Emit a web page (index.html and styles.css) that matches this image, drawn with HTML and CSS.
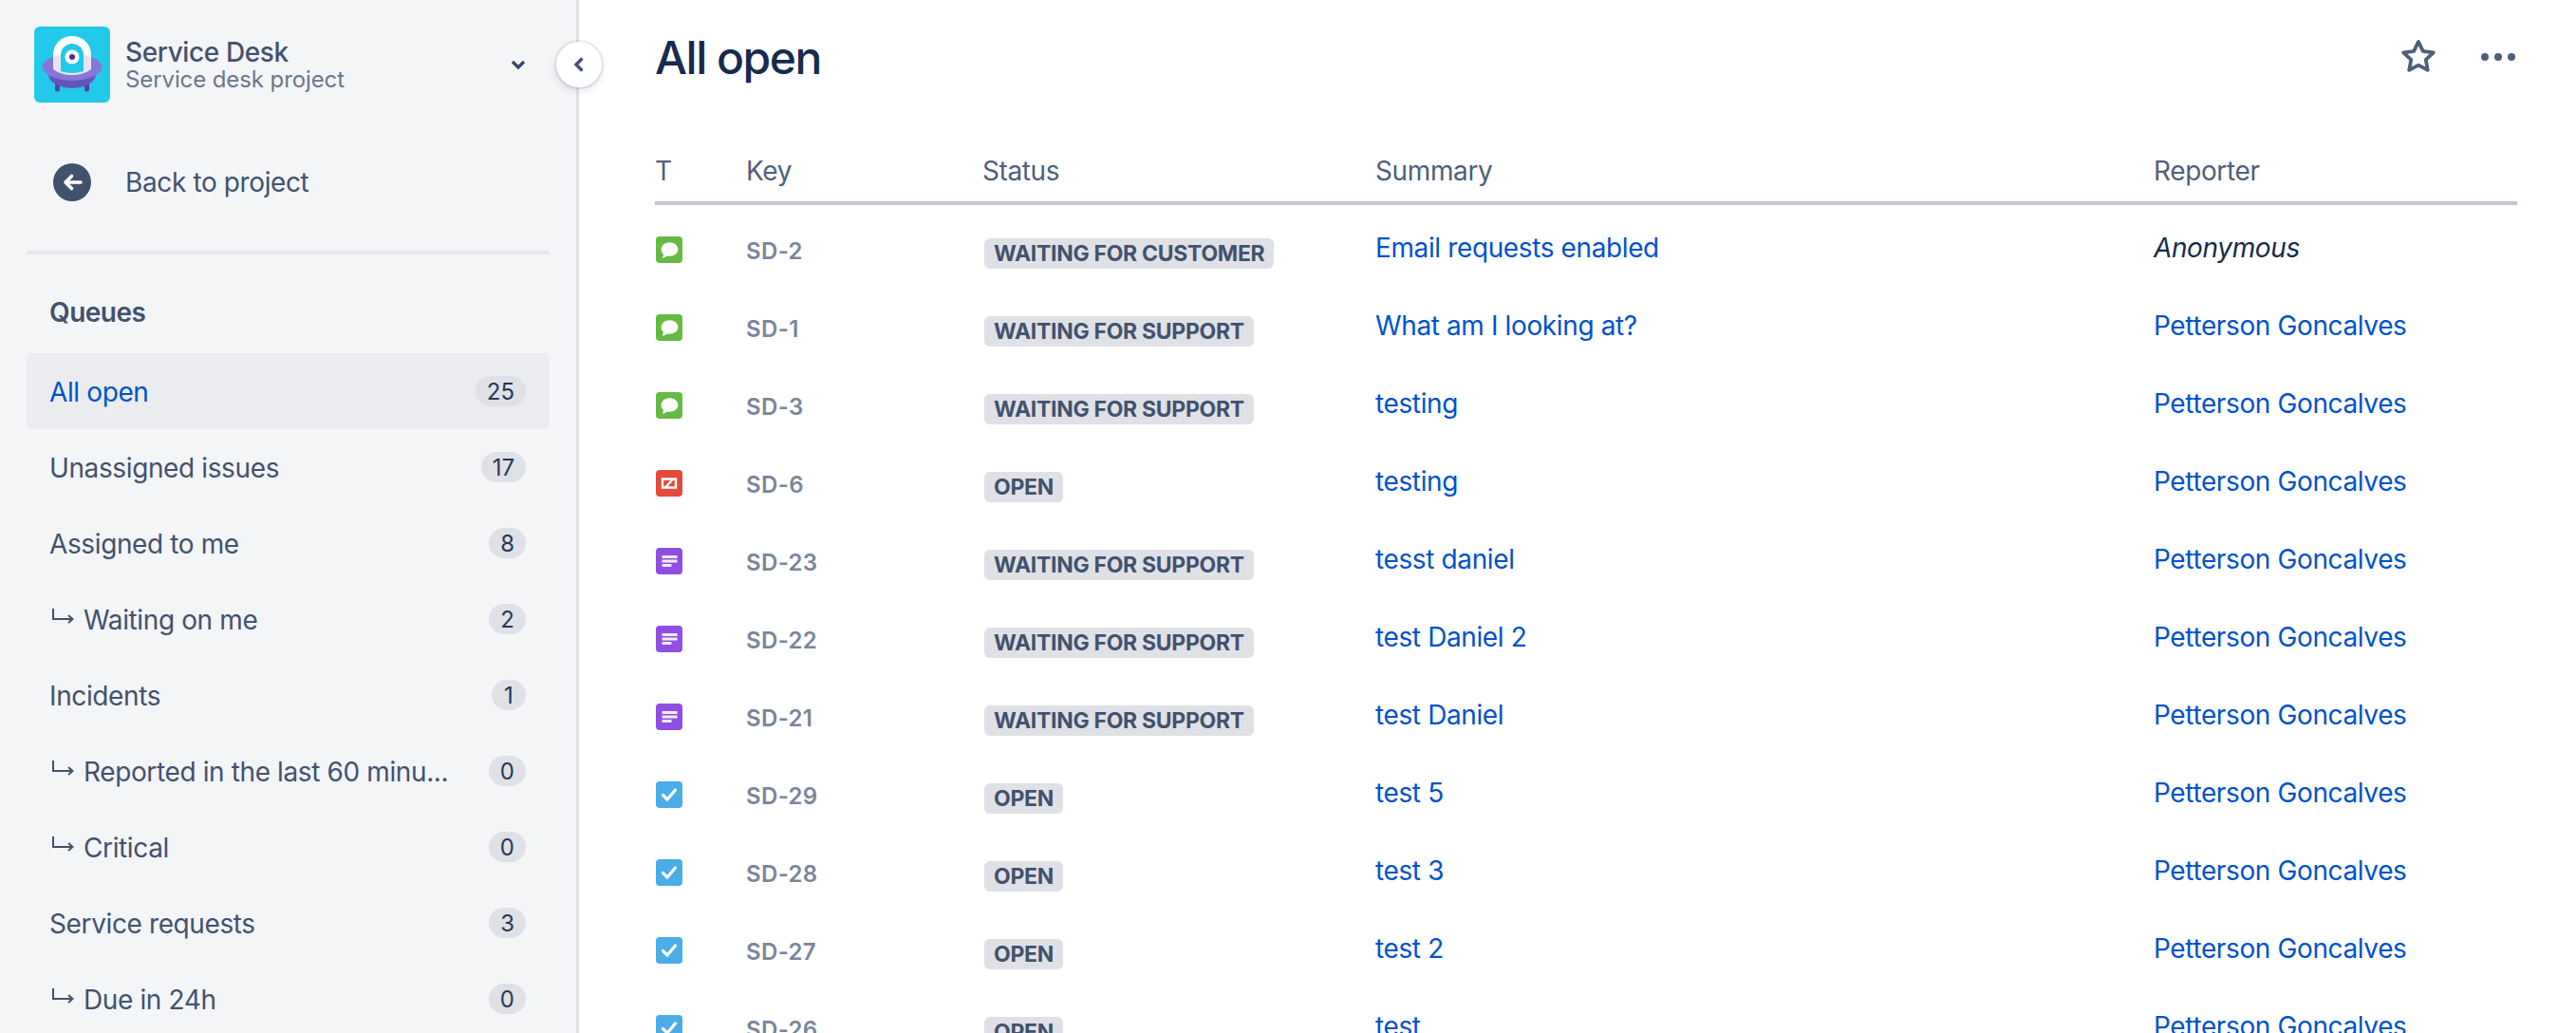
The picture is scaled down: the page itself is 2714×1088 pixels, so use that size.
FILE: index.html
```html
<!DOCTYPE html>
<html lang="en">
<head>
<meta charset="utf-8">
<title>All open - Service Desk</title>
<link rel="stylesheet" href="styles.css">
</head>
<body>
<svg class="defs" width="0" height="0" aria-hidden="true">
  <symbol id="i-chat" viewBox="0 0 28 28"><rect width="28" height="28" rx="4" fill="#65ba43"/><path d="M14.500 6.200c-5 0-8.900 3-8.900 7.500 0 2.200.9 3.900 2.400 5.100-.1 1.300-.5 2.800-1.300 3.900 2-.2 3.800-1 5-2.300.9.200 1.800.3 2.800.3 5 0 8.900-3 8.900-7 0-4.500-3.900-7.500-8.900-7.500z" fill="#fff"/></symbol>
  <symbol id="i-inc" viewBox="0 0 28 28"><rect width="28" height="28" rx="4" fill="#e5493a"/><path d="M7 9.500h14v9H7z" fill="none" stroke="#fff" stroke-width="2.400"/><path d="M10 18.500l8-9" stroke="#fff" stroke-width="2.400"/></symbol>
  <symbol id="i-doc" viewBox="0 0 28 28"><rect width="28" height="28" rx="4" fill="#904ee2"/><path d="M6.500 9.500h16M6.500 14h16M6.500 18.500h10" stroke="#f3ebfd" stroke-width="2.800"/></symbol>
  <symbol id="i-task" viewBox="0 0 28 28"><rect width="28" height="28" rx="4" fill="#4bade8"/><path d="M7.500 14.500l4.500 4.500 8.500-10" fill="none" stroke="#fff" stroke-width="3.200" stroke-linecap="round" stroke-linejoin="round"/></symbol>
  <symbol id="i-sub" viewBox="0 0 24 18"><path d="M1 1v11h20M17 8l4.500 4-4.500 4" fill="none" stroke="#42526e" stroke-width="2"/></symbol>
</svg>
<div class="app">
  <aside class="sidebar">
    <div class="project">
      <svg class="logo" viewBox="0 0 80 80">
        <rect width="80" height="80" rx="6" fill="#23c9e8"/>
        <rect x="22" y="50" width="5" height="18.500" rx="2.500" fill="#5243aa"/>
        <rect x="53" y="50" width="5" height="18.500" rx="2.500" fill="#5243aa"/>
        <ellipse cx="40" cy="50" rx="25" ry="15" fill="#6554c0"/>
        <path d="M20 30a20 20 0 0 1 40 0v20H20z" fill="#fff"/>
        <ellipse cx="40" cy="42.700" rx="31.300" ry="14" fill="#8777d9"/>
        <path d="M20 30a20 20 0 0 1 40 0v15q-8 6-20 6t-20-6z" fill="#fff" opacity=".8"/>
        <path d="M28 30a12 12 0 0 1 24 0v17q-6 2-12 2t-12-2z" fill="#23c9e8"/>
        <circle cx="40" cy="32" r="7.500" fill="#fff"/>
        <circle cx="40" cy="32" r="3" fill="#403294"/>
      </svg>
      <div class="project-text">
        <div class="project-name">Service Desk</div>
        <div class="project-type">Service desk project</div>
      </div>
      <svg class="project-caret" viewBox="0 0 16 12"><path d="M2 3l6 6 6-6" fill="none" stroke="#344563" stroke-width="3.200"/></svg>
    </div>
    <div class="back">
      <svg class="back-icon" viewBox="0 0 40 40"><circle cx="20" cy="20" r="20" fill="#42526e"/><path d="M29 20H13M19.500 13.500L13 20l6.500 6.500" fill="none" stroke="#fff" stroke-width="3.600" stroke-linecap="round" stroke-linejoin="round"/></svg>
      <span>Back to project</span>
    </div>
    <div class="divider"></div>
    <div class="queues-title">Queues</div>
    <nav class="queues">
      <a class="queue active"><span class="q-name">All open</span><span class="q-count">25</span></a>
      <a class="queue"><span class="q-name">Unassigned issues</span><span class="q-count">17</span></a>
      <a class="queue"><span class="q-name">Assigned to me</span><span class="q-count">8</span></a>
      <a class="queue"><svg class="q-sub"><use href="#i-sub"/></svg><span class="q-name">Waiting on me</span><span class="q-count">2</span></a>
      <a class="queue"><span class="q-name">Incidents</span><span class="q-count">1</span></a>
      <a class="queue"><svg class="q-sub"><use href="#i-sub"/></svg><span class="q-name">Reported in the last 60 minu...</span><span class="q-count">0</span></a>
      <a class="queue"><svg class="q-sub"><use href="#i-sub"/></svg><span class="q-name">Critical</span><span class="q-count">0</span></a>
      <a class="queue"><span class="q-name">Service requests</span><span class="q-count">3</span></a>
      <a class="queue"><svg class="q-sub"><use href="#i-sub"/></svg><span class="q-name">Due in 24h</span><span class="q-count">0</span></a>
    </nav>
    <button class="collapse" aria-label="Collapse sidebar"><svg viewBox="0 0 14 20"><path d="M10.500 3.500L4 10l6.500 6.500" fill="none" stroke="#42526e" stroke-width="3.400"/></svg></button>
  </aside>
  <main class="main">
    <header class="page-head">
      <h1>All open</h1>
      <div class="actions">
        <svg class="star" viewBox="0 0 36 36"><path d="M18 3.500l4.300 9 9.900 1.300-7.200 6.800 1.800 9.800-8.800-4.700-8.800 4.700 1.800-9.800-7.200-6.800 9.900-1.300z" fill="none" stroke="#505f79" stroke-width="3.400" stroke-linejoin="round"/></svg>
        <svg class="more" viewBox="0 0 36 8"><circle cx="4" cy="4" r="4" fill="#505f79"/><circle cx="18" cy="4" r="4" fill="#505f79"/><circle cx="32" cy="4" r="4" fill="#505f79"/></svg>
      </div>
    </header>
    <div class="table">
      <div class="thead"><span>T</span><span>Key</span><span>Status</span><span>Summary</span><span>Reporter</span></div>
      <div class="row"><svg class="type"><use href="#i-chat"/></svg><span class="key">SD-2</span><span class="status"><span class="lozenge">Waiting for customer</span></span><a class="link">Email requests enabled</a><em class="anon">Anonymous</em></div>
      <div class="row"><svg class="type"><use href="#i-chat"/></svg><span class="key">SD-1</span><span class="status"><span class="lozenge">Waiting for support</span></span><a class="link">What am I looking at?</a><a class="link">Petterson Goncalves</a></div>
      <div class="row"><svg class="type"><use href="#i-chat"/></svg><span class="key">SD-3</span><span class="status"><span class="lozenge">Waiting for support</span></span><a class="link">testing</a><a class="link">Petterson Goncalves</a></div>
      <div class="row"><svg class="type"><use href="#i-inc"/></svg><span class="key">SD-6</span><span class="status"><span class="lozenge">Open</span></span><a class="link">testing</a><a class="link">Petterson Goncalves</a></div>
      <div class="row"><svg class="type"><use href="#i-doc"/></svg><span class="key">SD-23</span><span class="status"><span class="lozenge">Waiting for support</span></span><a class="link">tesst daniel</a><a class="link">Petterson Goncalves</a></div>
      <div class="row"><svg class="type"><use href="#i-doc"/></svg><span class="key">SD-22</span><span class="status"><span class="lozenge">Waiting for support</span></span><a class="link">test Daniel 2</a><a class="link">Petterson Goncalves</a></div>
      <div class="row"><svg class="type"><use href="#i-doc"/></svg><span class="key">SD-21</span><span class="status"><span class="lozenge">Waiting for support</span></span><a class="link">test Daniel</a><a class="link">Petterson Goncalves</a></div>
      <div class="row"><svg class="type"><use href="#i-task"/></svg><span class="key">SD-29</span><span class="status"><span class="lozenge">Open</span></span><a class="link">test 5</a><a class="link">Petterson Goncalves</a></div>
      <div class="row"><svg class="type"><use href="#i-task"/></svg><span class="key">SD-28</span><span class="status"><span class="lozenge">Open</span></span><a class="link">test 3</a><a class="link">Petterson Goncalves</a></div>
      <div class="row"><svg class="type"><use href="#i-task"/></svg><span class="key">SD-27</span><span class="status"><span class="lozenge">Open</span></span><a class="link">test 2</a><a class="link">Petterson Goncalves</a></div>
      <div class="row"><svg class="type"><use href="#i-task"/></svg><span class="key">SD-26</span><span class="status"><span class="lozenge">Open</span></span><a class="link">test</a><a class="link">Petterson Goncalves</a></div>
    </div>
  </main>
</div>
</body>
</html>
```
FILE: styles.css
```css
* { box-sizing: border-box; }
html, body { margin: 0; height: 100%; overflow: hidden; background: #fff; }
body { font-family: Inter, "Noto Sans", sans-serif; font-size: 28px; letter-spacing: -.38px; color: #172b4d; }
.defs { position: absolute; }
.app { display: flex; height: 1088px; overflow: hidden; }

.sidebar { position: relative; flex: 0 0 610px; background: #f4f5f7; border-right: 3px solid #dfe1e6; padding: 28px 28px 0; }
.project { display: flex; align-items: center; padding-left: 8px; height: 80px; }
.logo { width: 80px; height: 80px; flex: none; }
.project-text { margin-left: 16px; flex: 1; }
.project-name { font-size: 28px; line-height: 32px; font-weight: 500; color: #42526e; }
.project-type { font-size: 24px; line-height: 28px; letter-spacing: -.1px; color: #6b778c; margin-top: -1px; }
.project-caret { width: 16px; height: 12px; margin-right: 25px; }
.back { display: flex; align-items: center; height: 40px; margin-top: 64px; padding-left: 28px; color: #42526e; }
.back-icon { width: 40px; height: 40px; margin-right: 36px; }
.divider { height: 4px; border-radius: 2px; background: #e4e6eb; margin-top: 52px; }
.queues-title { font-size: 28px; font-weight: 600; line-height: 32px; letter-spacing: -.5px; color: #42526e; padding-left: 24px; margin-top: 45px; }
.queues { margin-top: 27px; }
.queue { display: flex; align-items: center; height: 80px; padding: 0 25px 0 24px; border-radius: 6px; color: #42526e; }
.queue.active { background: #ebecf0; color: #0052cc; }
.q-name { flex: 1; min-width: 0; padding-top: 2px; white-space: nowrap; overflow: hidden; text-overflow: ellipsis; }
.q-sub { width: 24px; height: 18px; flex: none; margin: -6px 9px 0 3px; }
.q-count { flex: none; margin-left: 16px; height: 32px; line-height: 34px; min-width: 36px; padding: 0 12px; border-radius: 16px; background: #dfe1e6; color: #253858; font-size: 24px; letter-spacing: 0; text-align: center; }
.collapse { position: absolute; right: -27px; top: 44px; width: 48px; height: 48px; padding: 0; display: flex; align-items: center; justify-content: center; border: 0; border-radius: 50%; background: #fff; box-shadow: 0 0 0 2px rgba(9,30,66,.08), 0 4px 8px rgba(9,30,66,.12); }
.collapse svg { width: 14px; height: 20px; }

.main { flex: 1; min-width: 0; padding: 0 62px 0 80px; }
.page-head { display: flex; align-items: center; justify-content: space-between; height: 120px; }
h1 { margin: 0; padding-top: 2px; font-size: 48px; line-height: 118px; font-weight: 500; color: #172b4d; letter-spacing: -1.5px; }
.actions { display: flex; align-items: center; gap: 46px; padding-right: 2px; }
.star { width: 40px; height: 40px; }
.more { width: 36px; height: 8px; }
.thead, .row { display: grid; grid-template-columns: 96px 249px 414px 820px 1fr; }
.thead { height: 96px; padding-top: 44px; line-height: 32px; border-bottom: 4px solid #c1c7d0; color: #505f79; }
.row { height: 82px; padding-top: 8px; align-items: center; }
.type { width: 28px; height: 28px; margin: 4px 0 0 1px; }
.key { font-size: 24px; font-weight: 600; letter-spacing: .35px; color: #7a869a; margin-top: 6px; }
.status { display: block; margin: 9px 0 0 2px; }
.lozenge { display: inline-block; height: 32px; line-height: 32px; padding: 0 10px; border-radius: 6px; background: #dfe1e6; color: #42526e; font-size: 23px; font-weight: 700; letter-spacing: -.3px; text-transform: uppercase; }
.link { color: #0052cc; }
.anon { color: #172b4d; }
```
